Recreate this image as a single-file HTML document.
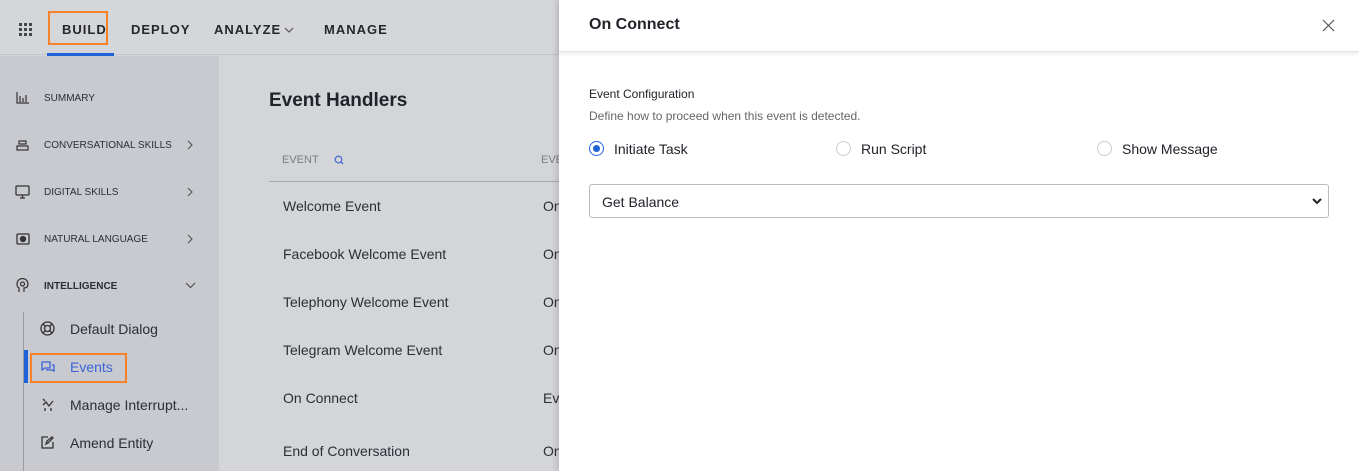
<!DOCTYPE html>
<html><head><meta charset="utf-8"><style>
*{margin:0;padding:0;box-sizing:border-box}
body{width:1359px;height:471px;overflow:hidden;position:relative;font-family:"Liberation Sans",sans-serif;background:#d4d5d9;color:#202329}
.a{position:absolute;white-space:nowrap}
.top{left:0;top:0;width:560px;height:55px;background:#d5d6da;border-bottom:1px solid #c4c5ca}
.nav{font-size:13px;font-weight:bold;letter-spacing:1px;color:#25272d;top:22px}
.side{left:0;top:56px;width:219px;height:415px;background:#c8cad0}
.si{font-size:10px;color:#2b2e35;left:44px}
.sub{font-size:14px;color:#2b2e35;left:70px}
.row{font-size:14px;color:#2b2e35;left:283px}
.col2{font-size:14px;color:#2b2e35;left:543px}
.panel{left:559px;top:0;width:800px;height:471px;background:#fff;box-shadow:-2px 0 6px rgba(0,0,0,.15)}
.ph{left:0;top:0;width:800px;height:52px;border-bottom:1px solid #e3e3e3;box-shadow:0 2px 4px rgba(0,0,0,.08)}
.rad{width:15px;height:15px;border-radius:50%;border:1px solid #ccc}
</style></head><body>
<div class="a top"></div>
<svg class="a" style="left:19px;top:23px" width="13" height="13" viewBox="0 0 13 13" fill="#44464c"><rect x="0" y="0" width="3" height="3"/><rect x="5" y="0" width="3" height="3"/><rect x="10" y="0" width="3" height="3"/><rect x="0" y="5" width="3" height="3"/><rect x="5" y="5" width="3" height="3"/><rect x="10" y="5" width="3" height="3"/><rect x="0" y="10" width="3" height="3"/><rect x="5" y="10" width="3" height="3"/><rect x="10" y="10" width="3" height="3"/></svg>
<div class="a" style="left:48px;top:11px;width:60px;height:34px;border:2px solid #f5822a"></div>
<div class="a nav" style="left:62px">BUILD</div>
<div class="a" style="left:47px;top:53px;width:67px;height:3px;background:#1f62d8"></div>
<div class="a nav" style="left:131px">DEPLOY</div>
<div class="a nav" style="left:214px">ANALYZE</div>
<svg class="a" style="left:284px;top:27px" width="10" height="6" viewBox="0 0 10 6" fill="none" stroke="#555" stroke-width="1.2"><path d="M1 1l4 4 4-4"/></svg>
<div class="a nav" style="left:324px">MANAGE</div>

<div class="a side"></div>
<div class="a si" style="top:93px">SUMMARY</div>
<svg class="a" style="left:16px;top:92px" width="13" height="12" viewBox="0 0 13 12" fill="none" stroke="#333" stroke-width="1.2"><path d="M1 0V11H13M4 4v6M7 6v4M10 3v7"/></svg>
<div class="a si" style="top:140px">CONVERSATIONAL SKILLS</div>
<svg class="a" style="left:16px;top:140px" width="13" height="11" viewBox="0 0 13 11" fill="none" stroke="#333" stroke-width="1.2"><rect x="3" y="1" width="7" height="3"/><rect x="1" y="6" width="11" height="4"/></svg>
<svg class="a" style="left:187px;top:140px" width="6" height="10" viewBox="0 0 6 10" fill="none" stroke="#555" stroke-width="1.1"><path d="M1 1l4 4-4 4"/></svg>
<div class="a si" style="top:187px">DIGITAL SKILLS</div>
<svg class="a" style="left:15px;top:185px" width="15" height="14" viewBox="0 0 15 14" fill="none" stroke="#333" stroke-width="1.3"><rect x="1" y="1" width="13" height="9" rx="1"/><path d="M5 13h5M7.5 10v3"/></svg>
<svg class="a" style="left:187px;top:187px" width="6" height="10" viewBox="0 0 6 10" fill="none" stroke="#555" stroke-width="1.1"><path d="M1 1l4 4-4 4"/></svg>
<div class="a si" style="top:234px">NATURAL LANGUAGE</div>
<svg class="a" style="left:16px;top:233px" width="14" height="12" viewBox="0 0 14 12" fill="none" stroke="#333" stroke-width="1.3"><rect x="1" y="1" width="12" height="10" rx="1"/><circle cx="7" cy="6" r="2.5" fill="#333"/></svg>
<svg class="a" style="left:187px;top:234px" width="6" height="10" viewBox="0 0 6 10" fill="none" stroke="#555" stroke-width="1.1"><path d="M1 1l4 4-4 4"/></svg>
<div class="a si" style="top:281px;font-weight:bold">INTELLIGENCE</div>
<svg class="a" style="left:16px;top:278px" width="13" height="15" viewBox="0 0 13 15" fill="none" stroke="#333" stroke-width="1.2"><path d="M3 14V10C1 9 1 7 1 6a5.5 5.5 0 0 1 11 0c0 3-2 4-4 4v4"/><circle cx="6.5" cy="6" r="2"/></svg>
<svg class="a" style="left:185px;top:282px" width="11" height="7" viewBox="0 0 11 7" fill="none" stroke="#555" stroke-width="1.2"><path d="M1 1l4.5 4.5L10 1"/></svg>
<div class="a" style="left:23px;top:312px;width:1px;height:159px;background:#9a9ca2"></div>
<svg class="a" style="left:40px;top:321px" width="15" height="15" viewBox="0 0 15 15" fill="none" stroke="#333" stroke-width="1.3"><circle cx="7.5" cy="7.5" r="6.5"/><circle cx="7.5" cy="7.5" r="3"/><path d="M3 3l2.5 2.5M12 3l-2.5 2.5M3 12l2.5-2.5M12 12l-2.5-2.5"/></svg>
<div class="a sub" style="top:321px">Default Dialog</div>
<div class="a" style="left:24px;top:350px;width:4px;height:33px;background:#1f62d8"></div>
<div class="a" style="left:30px;top:353px;width:97px;height:30px;border:2px solid #f5822a"></div>
<svg class="a" style="left:41px;top:361px" width="14" height="12" viewBox="0 0 14 12" fill="none" stroke="#3b64d6" stroke-width="1.3"><path d="M1 1h8v6H4l-3 2z"/><path d="M11 4h2v6l-2-1H6V8"/></svg>
<div class="a sub" style="top:359px;color:#3b64d6">Events</div>
<svg class="a" style="left:42px;top:398px" width="13" height="14" viewBox="0 0 13 14" fill="none" stroke="#333" stroke-width="1.3"><path d="M1 7l3-3 3 4 4-5M3 10v3M9 10v3M1 1l2 2"/></svg>
<div class="a sub" style="top:397px">Manage Interrupt...</div>
<svg class="a" style="left:41px;top:436px" width="13" height="13" viewBox="0 0 13 13" fill="none" stroke="#333" stroke-width="1.3"><path d="M7 1H1v11h11V6"/><path d="M5 8l1-3 5-4 1 1-5 5z"/></svg>
<div class="a sub" style="top:435px">Amend Entity</div>

<div class="a" style="left:269px;top:90px;font-size:19px;font-weight:bold;color:#202329">Event Handlers</div>
<div class="a" style="left:282px;top:154px;font-size:11px;color:#7a7d85">EVENT</div>
<svg class="a" style="left:334px;top:155px" width="10" height="10" viewBox="0 0 10 10" fill="none" stroke="#4b6fd8" stroke-width="1.3"><circle cx="4.5" cy="4.5" r="3.3"/><path d="M7 7l2 2"/></svg>
<div class="a" style="left:541px;top:154px;font-size:11px;color:#7a7d85">EVE</div>
<div class="a" style="left:269px;top:181px;width:291px;height:1px;background:#a7a9ae"></div>
<div class="a row" style="top:198px">Welcome Event</div><div class="a col2" style="top:198px">On</div>
<div class="a row" style="top:246px">Facebook Welcome Event</div><div class="a col2" style="top:246px">On</div>
<div class="a row" style="top:294px">Telephony Welcome Event</div><div class="a col2" style="top:294px">On</div>
<div class="a row" style="top:342px">Telegram Welcome Event</div><div class="a col2" style="top:342px">On</div>
<div class="a row" style="top:390px">On Connect</div><div class="a col2" style="top:390px">Ev</div>
<div class="a row" style="top:443px">End of Conversation</div><div class="a col2" style="top:443px">On</div>

<div class="a panel">
<div class="a ph"></div>
<div class="a" style="left:30px;top:16px;font-size:16px;font-weight:bold;color:#202329">On Connect</div>
<svg class="a" style="left:763px;top:19px" width="13" height="13" viewBox="0 0 13 13" stroke="#555" stroke-width="1.2"><path d="M1 1l11 11M12 1L1 12"/></svg>
<div class="a" style="left:30px;top:87px;font-size:12px;color:#202329">Event Configuration</div>
<div class="a" style="left:30px;top:109px;font-size:12px;color:#666">Define how to proceed when this event is detected.</div>
<div class="a rad" style="left:30px;top:141px;border-color:#1f62d8"><div style="position:absolute;left:3px;top:3px;width:7px;height:7px;border-radius:50%;background:#1f62d8"></div></div>
<div class="a" style="left:55px;top:141px;font-size:14px">Initiate Task</div>
<div class="a rad" style="left:277px;top:141px"></div>
<div class="a" style="left:302px;top:141px;font-size:14px">Run Script</div>
<div class="a rad" style="left:538px;top:141px"></div>
<div class="a" style="left:563px;top:141px;font-size:14px">Show Message</div>
<div class="a" style="left:30px;top:184px;width:740px;height:34px;border:1px solid #bbb;border-radius:3px"></div>
<div class="a" style="left:43px;top:194px;font-size:14px">Get Balance</div>
<svg class="a" style="left:753px;top:198px" width="10" height="7" viewBox="0 0 10 7" fill="none" stroke="#222" stroke-width="2"><path d="M1 1l4 4 4-4"/></svg>
</div>
</body></html>
